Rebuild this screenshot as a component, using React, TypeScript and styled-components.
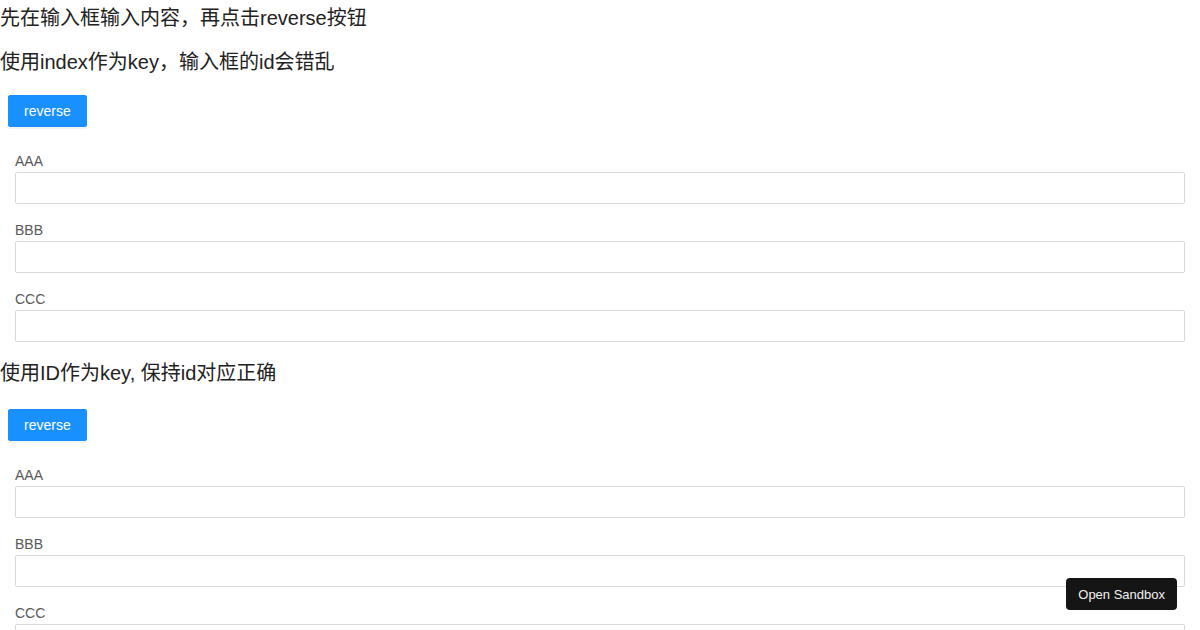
import { useState } from "react";
import styled, { createGlobalStyle } from "styled-components";

const GlobalStyle = createGlobalStyle`
  html, body {
    margin: 0;
    padding: 0;
    background: #fff;
  }
  body {
    font-family: "Liberation Sans", Arial, "Noto Sans CJK SC", sans-serif;
    color: rgba(0, 0, 0, 0.85);
  }
  * {
    box-sizing: border-box;
  }
`;

const Page = styled.div`
  padding-top: 4px;
`;

// top margin collapses with the last form item's bottom margin
const Title = styled.h3<{ $top?: number; $bottom?: number }>`
  margin: ${(p) => p.$top ?? 0}px 0 ${(p) => p.$bottom ?? 16}px;
  font-size: 20px;
  line-height: 28px;
  font-weight: 400;
  color: #222;
`;

const ButtonRow = styled.div`
  padding-left: 8px;
`;

const PrimaryButton = styled.button`
  height: 32px;
  padding: 4px 15px;
  border: 1px solid #1890ff;
  border-radius: 2px;
  background: #1890ff;
  color: #fff;
  font-family: inherit;
  font-size: 14px;
  line-height: 22px;
  box-shadow: 0 2px 0 rgba(0, 0, 0, 0.045);
  cursor: pointer;
`;

const Form = styled.div`
  margin-top: 23px;
  padding: 0 15px;
`;

const FormItem = styled.div`
  margin-bottom: 15px;
`;

const Label = styled.label`
  display: block;
  font-size: 14px;
  line-height: 22px;
  color: #595959;
`;

const Input = styled.input`
  display: block;
  width: 100%;
  height: 32px;
  padding: 4px 11px;
  border: 1px solid #d9d9d9;
  border-radius: 2px;
  font-family: inherit;
  font-size: 14px;
  color: rgba(0, 0, 0, 0.85);
  outline: none;
`;

const SandboxLink = styled.a`
  position: fixed;
  right: 23px;
  bottom: 20px;
  height: 32px;
  padding: 0 12px;
  display: flex;
  align-items: center;
  border-radius: 4px;
  background: #151515;
  color: #f2f2f2;
  font-size: 13px;
  text-decoration: none;
`;

type Item = { id: string; label: string };

const initial: Item[] = [
  { id: "a", label: "AAA" },
  { id: "b", label: "BBB" },
  { id: "c", label: "CCC" },
];

const IndexKeyList = () => {
  const [items, setItems] = useState<Item[]>(initial);
  return (
    <>
      <Title $bottom={19}>使用index作为key，输入框的id会错乱</Title>
      <ButtonRow>
        <PrimaryButton onClick={() => setItems([...items].reverse())}>
          reverse
        </PrimaryButton>
      </ButtonRow>
      <Form>
        {items.map((item, index) => (
          <FormItem key={index}>
            <Label>{item.label}</Label>
            <Input />
          </FormItem>
        ))}
      </Form>
    </>
  );
};

const IdKeyList = () => {
  const [items, setItems] = useState<Item[]>(initial);
  return (
    <>
      <Title $top={17} $bottom={22}>使用ID作为key, 保持id对应正确</Title>
      <ButtonRow>
        <PrimaryButton onClick={() => setItems([...items].reverse())}>
          reverse
        </PrimaryButton>
      </ButtonRow>
      <Form>
        {items.map((item) => (
          <FormItem key={item.id}>
            <Label>{item.label}</Label>
            <Input />
          </FormItem>
        ))}
      </Form>
    </>
  );
};

const App = () => {
  return (
    <Page>
      <GlobalStyle />
      <Title>先在输入框输入内容，再点击reverse按钮</Title>
      <IndexKeyList />
      <IdKeyList />
      <SandboxLink href="#">Open Sandbox</SandboxLink>
    </Page>
  );
};

export default App;
